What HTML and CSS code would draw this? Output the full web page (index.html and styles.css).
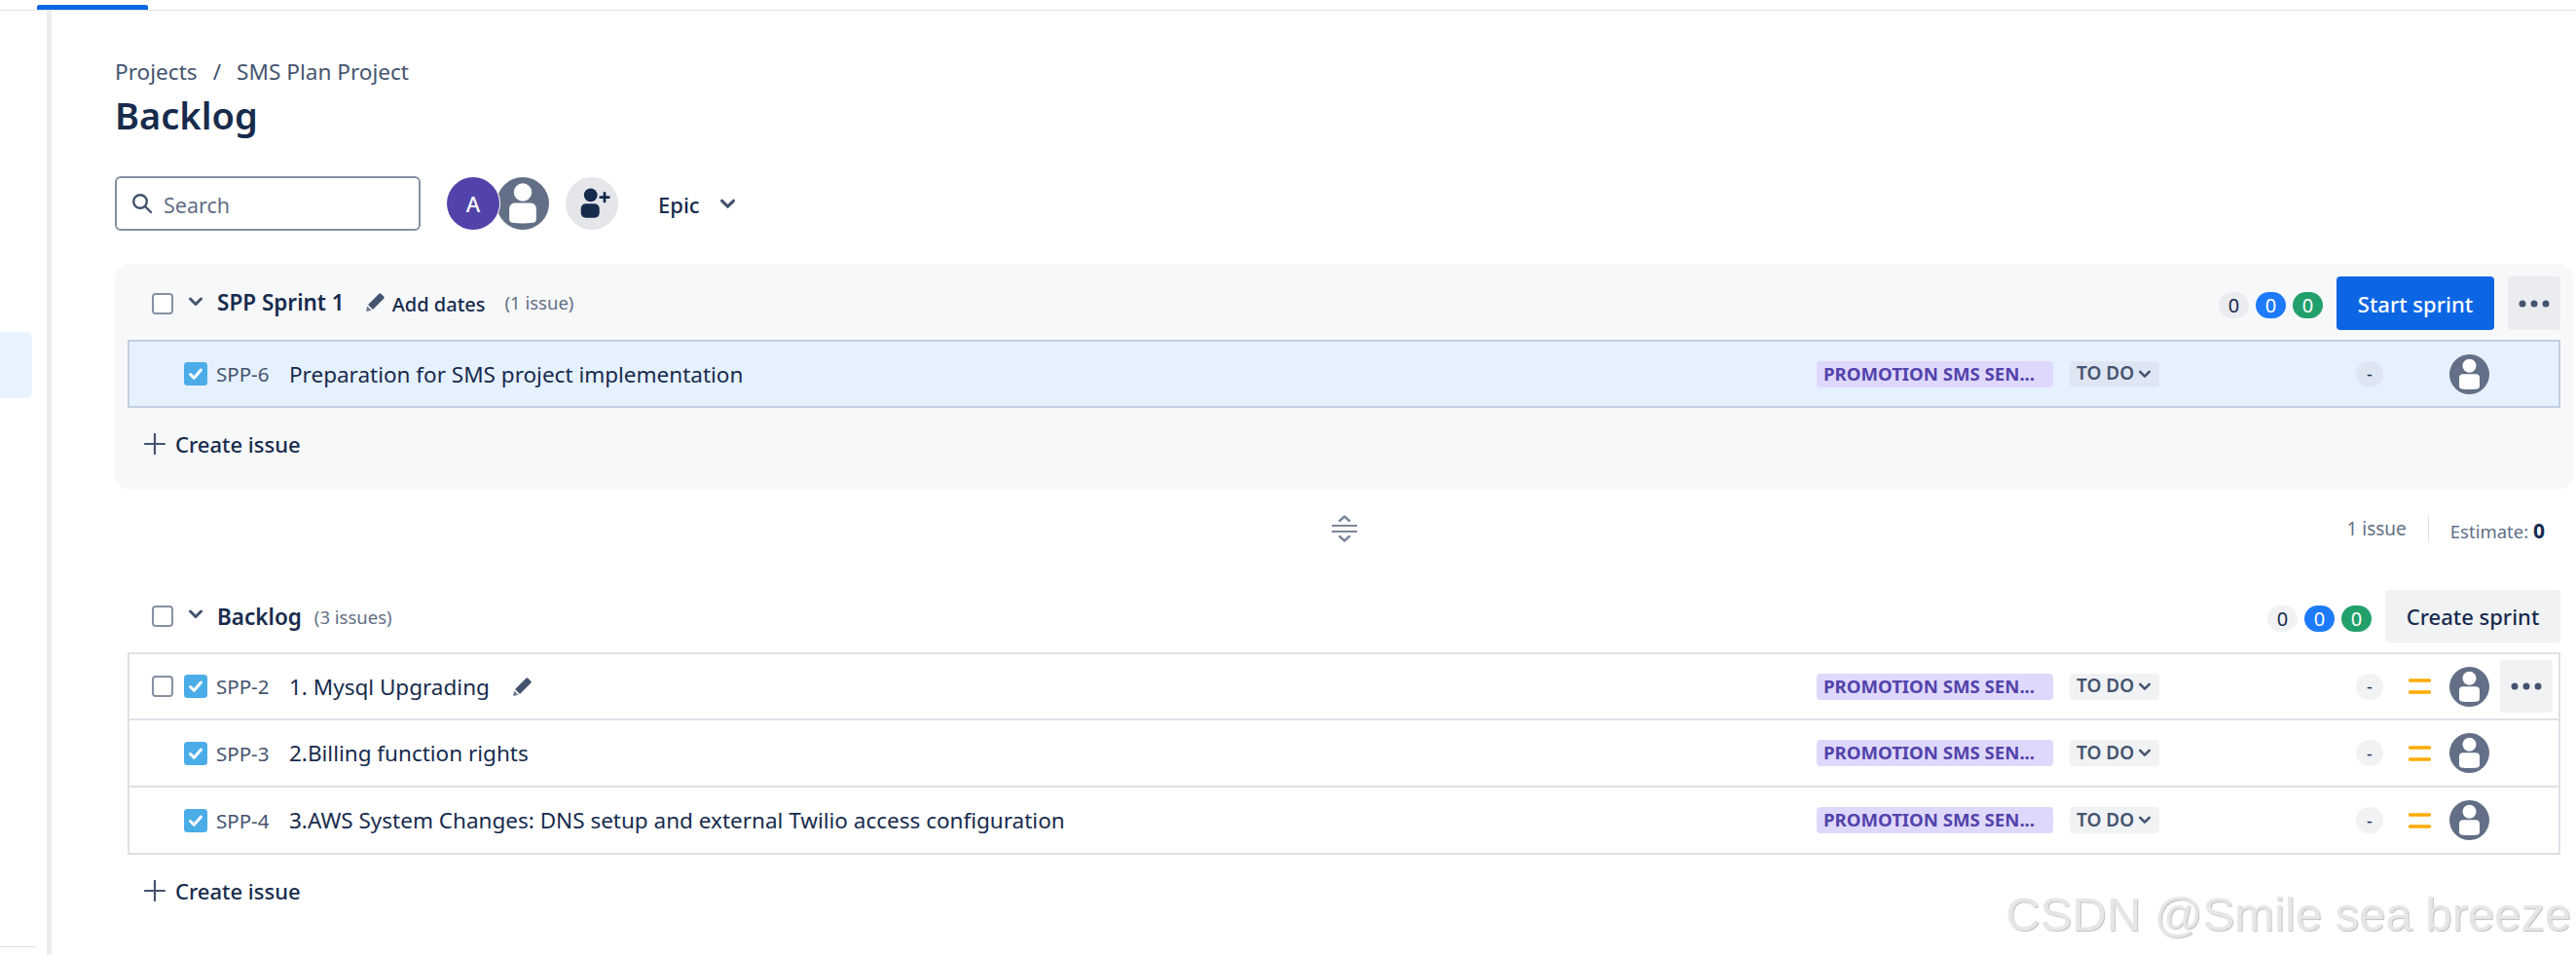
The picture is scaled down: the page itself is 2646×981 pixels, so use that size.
FILE: index.html
```html
<!DOCTYPE html>
<html lang="en">
<head>
<meta charset="utf-8">
<title>Backlog</title>
<link rel="stylesheet" href="styles.css">
</head>
<body>
<svg class="defs" width="0" height="0" aria-hidden="true">
  <symbol id="user" viewBox="0 0 41 41">
    <circle cx="20.5" cy="20.5" r="20.5" fill="#626f86"/>
    <circle cx="20.5" cy="11.8" r="7" fill="#fff"/>
    <path d="M14 20.2h13a4 4 0 0 1 4 4v8.6c0 1.6-1 2.4-2.400 2.700-5 .8-11.200.8-16.200 0-1.400-.3-2.400-1.100-2.400-2.700v-8.600a4 4 0 0 1 4-4z" fill="#fff"/>
  </symbol>
  <symbol id="chev" viewBox="0 0 14 10">
    <path d="M1.500 2l5.500 5.500L12.500 2" fill="none" stroke="currentColor" stroke-width="3" stroke-linecap="round" stroke-linejoin="round"/>
  </symbol>
  <symbol id="pencil" viewBox="0 0 19 19">
    <path d="M13.300.8a1.500 1.500 0 0 1 2.100 0l2.800 2.800a1.500 1.500 0 0 1 0 2.100L7 16.900 2.100 12z" fill="currentColor"/>
    <path d="M1.300 13.400l4.300 4.300-4.100 1.100a1 1 0 0 1-1.300-1.300z" fill="currentColor" opacity=".75"/>
  </symbol>
  <symbol id="check" viewBox="0 0 24 24">
    <rect width="24" height="24" rx="3.500" fill="#4bade8"/>
    <path d="M6.500 12.500l3.800 3.800 7.200-8.300" fill="none" stroke="#fff" stroke-width="3" stroke-linecap="round" stroke-linejoin="round"/>
  </symbol>
  <symbol id="plus" viewBox="0 0 22 22">
    <path d="M11 1v20M1 11h20" fill="none" stroke="currentColor" stroke-width="2.200" stroke-linecap="round"/>
  </symbol>
  <symbol id="prio" viewBox="0 0 23 16">
    <path d="M1.500 2h20M1.500 14h20" fill="none" stroke="#ffab00" stroke-width="3.400" stroke-linecap="round"/>
  </symbol>
  <symbol id="dots" viewBox="0 0 32 8">
    <circle cx="4" cy="4" r="3.500" fill="currentColor"/>
    <circle cx="16" cy="4" r="3.500" fill="currentColor"/>
    <circle cx="28" cy="4" r="3.500" fill="currentColor"/>
  </symbol>
</svg>

<div class="app">
  <header class="topbar"><span class="tab"></span></header>
  <div class="body">
    <nav class="sidebar">
      <span class="nav-active"></span>
      <span class="nav-line"></span>
    </nav>
    <div class="rail"></div>
    <main class="main">
      <div class="crumbs"><span>Projects</span><span class="sep">/</span><span>SMS Plan Project</span></div>
      <h1 class="title">Backlog</h1>

      <div class="toolbar">
        <label class="search">
          <svg class="search-ico" viewBox="0 0 22 22"><circle cx="9" cy="9" r="6.800" fill="none" stroke="currentColor" stroke-width="2.400"/><path d="M14 14l6 6" stroke="currentColor" stroke-width="2.400" stroke-linecap="round"/></svg>
          <span class="search-text">Search</span>
        </label>
        <div class="avatars">
          <span class="av-a">A</span>
          <svg class="av-user"><use href="#user"/></svg>
        </div>
        <span class="av-add">
          <svg viewBox="0 0 54 54"><circle cx="25.700" cy="18.300" r="6.900" fill="#172b4d"/><rect x="15.700" y="27.300" width="19" height="14.500" rx="5" fill="#172b4d"/><path d="M40 16.400v8.600M35.700 20.700h8.600" stroke="#172b4d" stroke-width="2.800" stroke-linecap="round"/></svg>
        </span>
        <div class="epic"><span class="epic-text">Epic</span><svg class="chev-epic"><use href="#chev"/></svg></div>
      </div>

      <section class="panel">
        <div class="sec-head">
          <span class="box"></span>
          <svg class="chev"><use href="#chev"/></svg>
          <strong class="sec-name">SPP Sprint 1</strong>
          <span class="add-dates"><svg class="pencil"><use href="#pencil"/></svg>Add dates</span>
          <span class="count">(1 issue)</span>
          <div class="sec-right">
            <span class="pill p-grey">0</span><span class="pill p-blue">0</span><span class="pill p-green">0</span>
            <span class="btn btn-primary">Start sprint</span>
            <span class="btn-more btn-more-head"><svg class="dots"><use href="#dots"/></svg></span>
          </div>
        </div>
        <div class="issue issue-selected">
          <span class="slot"></span>
          <svg class="tick"><use href="#check"/></svg>
          <span class="key">SPP-6</span>
          <span class="summary">Preparation for SMS project implementation</span>
          <span class="tag">PROMOTION SMS SEN...</span>
          <span class="status">TO DO<svg class="chev-s"><use href="#chev"/></svg></span>
          <span class="est">-</span>
          <span class="prio-slot"></span>
          <svg class="avatar"><use href="#user"/></svg>
          <span class="end-slot"></span>
        </div>
        <div class="create"><svg class="plus"><use href="#plus"/></svg>Create issue</div>
      </section>

      <div class="totals">
        <span></span>
        <svg class="divider-ico" viewBox="0 0 26 28"><path d="M8 6l5-4.500L18 6M8 22l5 4.500 5-4.500" fill="none" stroke="#7a869a" stroke-width="2.400" stroke-linecap="round" stroke-linejoin="round"/><path d="M0 11h26M0 17h26" stroke="#7a869a" stroke-width="2"/></svg>
        <div class="totals-right"><span class="t-issue">1 issue</span><span class="t-bar"></span><span class="t-est">Estimate: <b>0</b></span></div>
      </div>

      <section class="backlog">
        <div class="sec-head sec-head-plain">
          <span class="box"></span>
          <svg class="chev chev-raised"><use href="#chev"/></svg>
          <strong class="sec-name">Backlog</strong>
          <span class="count count-tight">(3 issues)</span>
          <div class="sec-right">
            <span class="pill p-grey-light">0</span><span class="pill p-blue">0</span><span class="pill p-green">0</span>
            <span class="btn btn-plain">Create sprint</span>
          </div>
        </div>
        <div class="issues">
          <div class="issue">
            <span class="slot"><span class="box"></span></span>
            <svg class="tick"><use href="#check"/></svg>
            <span class="key">SPP-2</span>
            <span class="summary">1. Mysql Upgrading<svg class="pencil pencil-row"><use href="#pencil"/></svg></span>
            <span class="tag">PROMOTION SMS SEN...</span>
            <span class="status status-light">TO DO<svg class="chev-s"><use href="#chev"/></svg></span>
            <span class="est est-light">-</span>
            <span class="prio-slot"><svg class="prio"><use href="#prio"/></svg></span>
            <svg class="avatar"><use href="#user"/></svg>
            <span class="end-slot"><span class="btn-more"><svg class="dots"><use href="#dots"/></svg></span></span>
          </div>
          <div class="issue">
            <span class="slot"></span>
            <svg class="tick"><use href="#check"/></svg>
            <span class="key">SPP-3</span>
            <span class="summary">2.Billing function rights</span>
            <span class="tag">PROMOTION SMS SEN...</span>
            <span class="status status-light">TO DO<svg class="chev-s"><use href="#chev"/></svg></span>
            <span class="est est-light">-</span>
            <span class="prio-slot"><svg class="prio"><use href="#prio"/></svg></span>
            <svg class="avatar"><use href="#user"/></svg>
            <span class="end-slot"></span>
          </div>
          <div class="issue">
            <span class="slot"></span>
            <svg class="tick"><use href="#check"/></svg>
            <span class="key">SPP-4</span>
            <span class="summary">3.AWS System Changes: DNS setup and external Twilio access configuration</span>
            <span class="tag">PROMOTION SMS SEN...</span>
            <span class="status status-light">TO DO<svg class="chev-s"><use href="#chev"/></svg></span>
            <span class="est est-light">-</span>
            <span class="prio-slot"><svg class="prio"><use href="#prio"/></svg></span>
            <svg class="avatar"><use href="#user"/></svg>
            <span class="end-slot"></span>
          </div>
        </div>
        <div class="create"><svg class="plus"><use href="#plus"/></svg>Create issue</div>
      </section>
    </main>
  </div>
  <div class="watermark">CSDN @Smile sea breeze</div>
</div>
</body>
</html>
```
FILE: styles.css
```css
* { box-sizing: border-box; }
html, body { margin: 0; padding: 0; background: #fff; }
body {
  font-family: "Noto Sans", "Open Sans", sans-serif;
  font-size: 22px;
  color: #172b4d;
  overflow: hidden;
}
.defs { position: absolute; }
svg { display: block; flex: none; }

.app { position: relative; width: 2646px; height: 981px; display: flex; flex-direction: column; overflow: hidden; }

.topbar { height: 11px; flex: none; border-bottom: 1px solid #dfe1e6; padding: 5px 0 0 38px; }
.tab { display: block; width: 114px; height: 5px; background: #0c66e4; border-radius: 2px 2px 0 0; }

.body { flex: 1; display: flex; min-height: 0; }
.sidebar { width: 48px; flex: none; display: flex; flex-direction: column; }
.nav-active { display: block; width: 33px; height: 68px; margin-top: 330px; background: #e9f2ff; border-radius: 0 6px 6px 0; }
.nav-line { display: block; width: 36px; height: 1px; margin-top: auto; margin-bottom: 8px; background: #dfe1e6; }
.rail { width: 5px; flex: none; background: #ebecf0; }
.main { flex: 1; min-width: 0; padding: 0 3px 0 65px; }

.crumbs { margin-top: 48px; height: 30px; line-height: 30px; display: flex; color: #44546f; font-size: 22.600px; }
.sep { margin: 0 16px; }
.title { margin: 4px 0 0; height: 50px; line-height: 50px; font-size: 38px; font-weight: 600; color: #172b4d; }

.toolbar { margin-top: 38px; height: 56px; display: flex; align-items: center; }
.search { width: 314px; height: 56px; border: 2px solid #8590a2; border-radius: 6px; display: flex; align-items: center; padding-left: 15px; color: #626f86; font-size: 21.500px; }
.search-ico { width: 22px; height: 22px; color: #44546f; margin-right: 11px; }
.search-text { padding-top: 2px; }
.avatars { display: flex; margin-left: 27px; }
.av-a { width: 54px; height: 54px; border-radius: 50%; background: #5243aa; color: #fff; font-size: 22px; font-weight: 500; display: flex; align-items: center; justify-content: center; box-shadow: 0 0 0 1px #fff; z-index: 1; }
.av-user { width: 54px; height: 54px; margin-left: -3px; }
.av-add { width: 54px; height: 54px; margin-left: 17px; border-radius: 50%; background: #e4e6ea; }
.av-add svg { width: 54px; height: 54px; }
.epic { margin-left: 41px; display: flex; align-items: center; font-size: 22px; font-weight: 500; }
.epic-text { padding-top: 2px; }
.chev-epic { width: 15px; height: 11px; margin-left: 21px; color: #44546f; }

.panel { margin-top: 34px; height: 232px; background: #f7f8f9; border-radius: 16px; padding: 0 13px; }
.sec-head { height: 78px; display: flex; align-items: center; padding: 3px 0 0 25px; }
.sec-head-plain { height: 54px; padding-top: 0; }
.box { display: block; width: 22px; height: 22px; border: 2px solid #8590a2; border-radius: 4px; background: #fff; flex: none; }
.chev { width: 14px; height: 10px; margin: 0 0 3px 16px; color: #44546f; }
.chev-raised { margin-bottom: 5px; }
.sec-name { margin: 0 0 3px 15px; font-size: 22.500px; font-weight: 600; white-space: nowrap; }
.sec-head-plain .sec-name { margin-bottom: 0; }
.add-dates { margin-left: 22px; display: flex; align-items: center; font-size: 20px; font-weight: 500; margin-top: 1px; }
.pencil { width: 19px; height: 19px; color: #44546f; margin-right: 8px; margin-top: -4px; }
.pencil-row { margin: 0 0 0 24px; }
.count { margin: 0 0 3px 20px; font-size: 18.500px; color: #626f86; }
.count-tight { margin: 0 0 0 13px; }
.sec-right { margin-left: auto; display: flex; align-items: center; }
.pill { width: 31px; height: 27px; border-radius: 14px; display: flex; align-items: center; justify-content: center; font-size: 20px; margin: 4px 7px 0 0; }
.p-grey { background: #ebecf0; color: #172b4d; }
.p-grey-light { background: #f1f2f4; color: #172b4d; }
.p-blue { background: #1d7afc; color: #fff; }
.p-green { background: #22a06b; color: #fff; margin-right: 14px; }
.btn { display: flex; align-items: center; justify-content: center; height: 55px; border-radius: 4px; font-size: 22px; font-weight: 500; }
.btn-primary { width: 162px; background: #0c66e4; color: #fff; }
.btn-plain { width: 180px; height: 54px; background: #f1f2f4; color: #172b4d; }
.btn-more { width: 54px; height: 54px; border-radius: 4px; background: #f1f2f4; color: #44546f; display: flex; align-items: center; justify-content: center; }
.btn-more-head { background: #ebecf0; margin-left: 14px; height: 55px; }
.dots { width: 32px; height: 8px; }

.issue { display: flex; align-items: center; height: 70px; padding: 0 6px 0 23px; }
.issue-selected { background: #e6f1ff; border: 2px solid #c1cfe2; }
.slot { width: 22px; flex: none; }
.tick { width: 24px; height: 24px; margin-left: 11px; }
.key { width: 75px; margin-left: 9px; flex: none; font-size: 20.500px; color: #44546f; }
.summary { flex: 1; min-width: 0; display: flex; align-items: center; white-space: nowrap; font-size: 22.500px; }
.issue-selected .summary { padding-top: 1px; }
.tag { width: 243px; height: 27px; flex: none; border-radius: 4px; background: #dfd8fd; color: #5243aa; font-size: 18.600px; font-weight: 700; padding: 0 0 2px 7px; display: flex; align-items: center; white-space: nowrap; }
.status { width: 92px; height: 27px; flex: none; margin-left: 17px; border-radius: 4px; background: #dfe6f3; color: #44546f; font-size: 19px; font-weight: 600; padding: 0 0 2px 7px; display: flex; align-items: center; }
.status-light { background: #f1f2f4; }
.chev-s { width: 12px; height: 9px; margin: 2px 0 0 5px; }
.est { width: 28px; height: 27px; flex: none; margin-left: 202px; border-radius: 14px; background: #dfe6f3; font-size: 18px; display: flex; align-items: center; justify-content: center; }
.est-light { background: #f1f2f4; }
.prio-slot { width: 23px; flex: none; margin-left: 26px; }
.prio { width: 23px; height: 16px; }
.avatar { width: 41px; height: 41px; margin-left: 19px; }
.end-slot { width: 54px; flex: none; margin-left: 11px; }

.create { height: 76px; display: flex; align-items: center; padding: 0 0 2px 17px; font-size: 22px; font-weight: 500; }
.plus { width: 22px; height: 22px; margin-right: 10px; color: #44546f; }

.totals { height: 80px; margin-bottom: 23px; display: grid; grid-template-columns: 1fr auto 1fr; align-items: center; }
.divider-ico { width: 26px; height: 28px; }
.totals-right { display: flex; align-items: center; justify-content: flex-end; padding-right: 29px; font-size: 19px; color: #626f86; }
.t-bar { width: 1px; height: 28px; background: #dfe1e6; margin: 0 22px; }
.t-est { font-size: 18.500px; padding-top: 3px; }
.t-est b { color: #172b4d; font-size: 21px; }

.backlog { padding: 0 13px; }
.issues { margin-top: 10px; border: 2px solid #dfe1e6; border-bottom-width: 0; }
.issues .issue { height: 69px; border-bottom: 2px solid #dfe1e6; }
.issues .issue:first-child { height: 68px; }

.watermark { position: absolute; right: 5px; top: 912px; font-family: "Liberation Sans", Arial, sans-serif; font-size: 49px; line-height: 54px; color: #e6e6e6; text-shadow: 1px 1px 1px #c0c0c0; white-space: nowrap; }
```
